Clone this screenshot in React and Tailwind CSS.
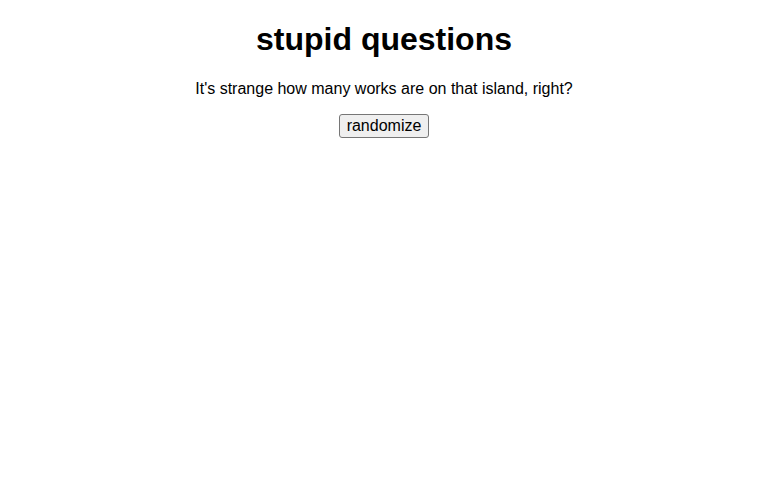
export default function App() {
  return (
    <div className="text-center text-black bg-white min-h-[480px] font-['Liberation_Sans',Arial,sans-serif]">
      <h1 className="text-[32px] leading-[37px] font-bold pt-[21px] mb-[22px]">stupid questions</h1>
      <p className="text-base leading-[18px] mb-4">It's strange how many works are on that island, right?</p>
      <button className="text-base leading-[18px] px-[7px] py-[2px] bg-[#efefef] border border-[#767676] rounded-[3px] text-black">
        randomize
      </button>
    </div>
  );
}
